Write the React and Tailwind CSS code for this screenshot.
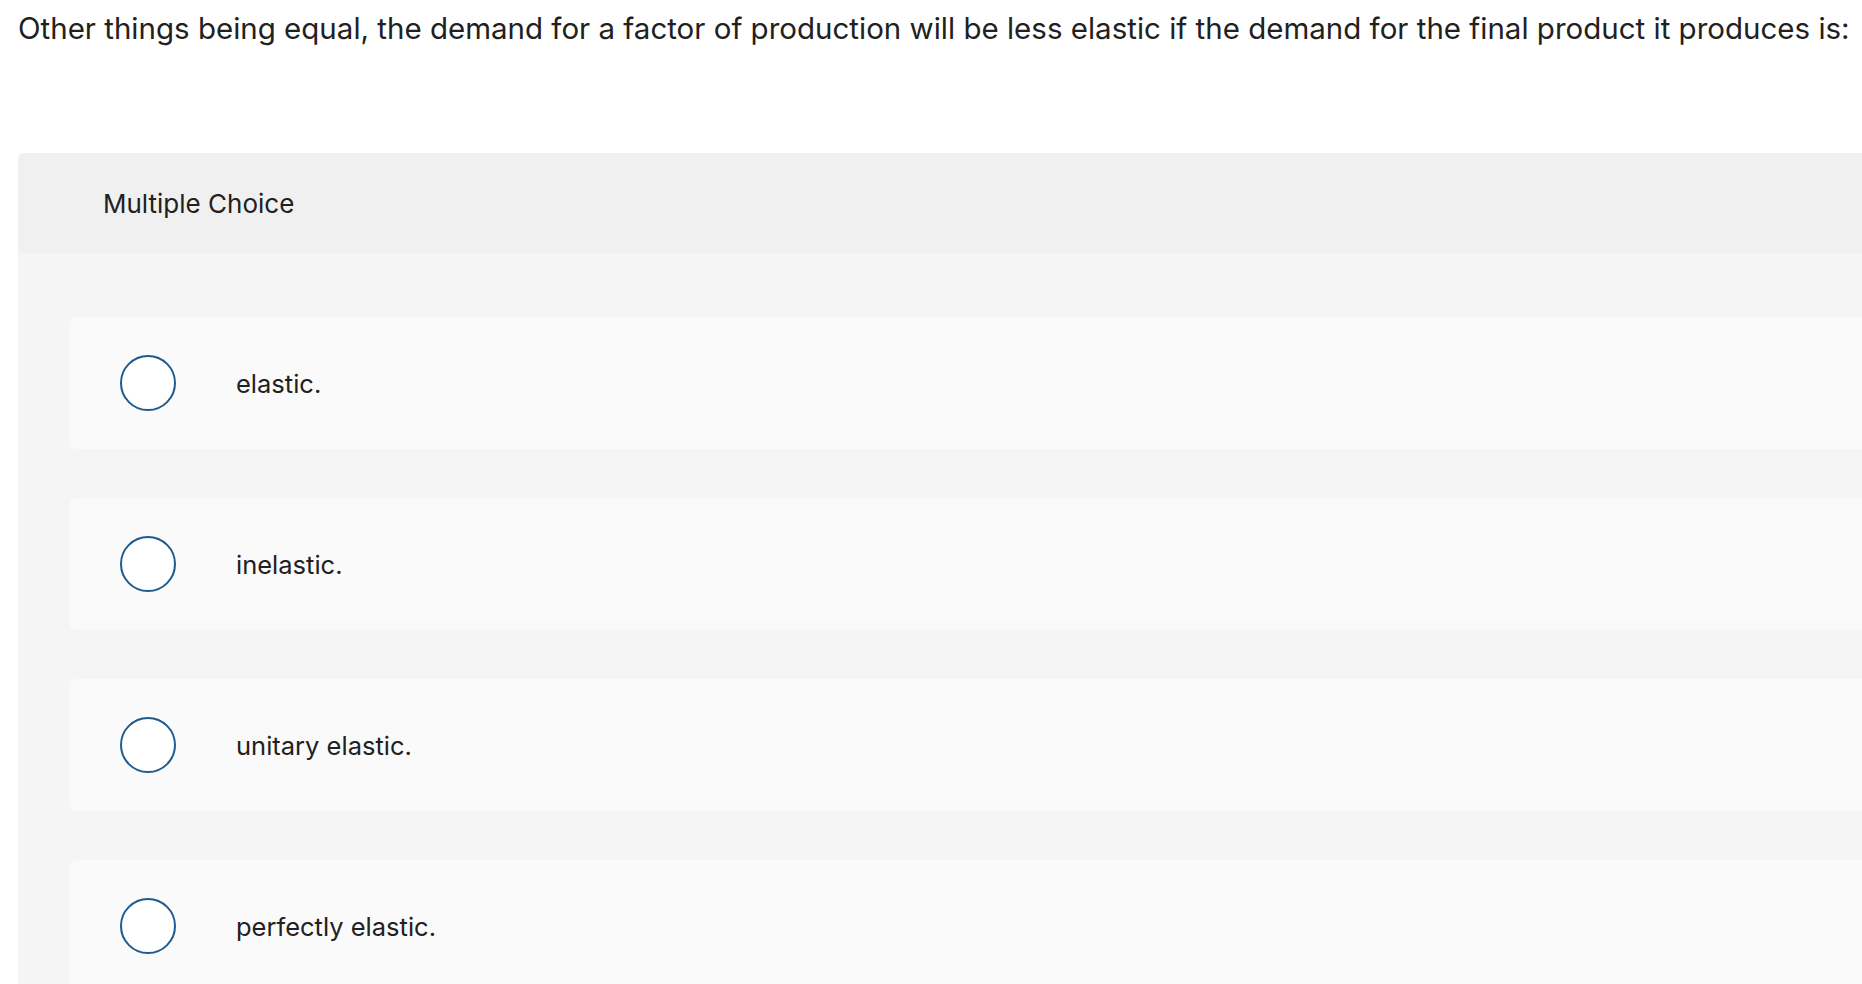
import React from "react";

const options = ["elastic.", "inelastic.", "unitary elastic.", "perfectly elastic."];

export default function App() {
  return (
    <div className="w-[1862px] h-[984px] overflow-hidden bg-white" style={{ fontFamily: "Inter, 'Noto Sans', sans-serif" }}>
      <div className="pl-[18px] pt-[10px] h-[153px]">
        <p className="text-[29.5px] leading-[36px] text-[#212121] whitespace-nowrap">
          Other things being equal, the demand for a factor of production will be less elastic if the demand for the final product it produces is:
        </p>
      </div>
      <div className="ml-[18px] rounded-tl-md bg-[#f5f5f5]">
        <div className="h-[100px] bg-[#f0f0f0] rounded-tl-md flex items-center pl-[85px]">
          <span className="text-[26px] text-[#212121]">Multiple Choice</span>
        </div>
        <div className="pt-[64px] pl-[52px] flex flex-col gap-[49px]">
          {options.map((o) => (
            <div key={o} className="h-[132px] bg-[#fafafa] rounded-l-md flex items-center pl-[50px]">
              <span className="w-[56px] h-[56px] rounded-full border-2 border-[#1f5a8e] bg-white shrink-0" />
              <span className="ml-[60px] pt-[2px] text-[25.5px] text-[#212121]">{o}</span>
            </div>
          ))}
        </div>
      </div>
    </div>
  );
}
